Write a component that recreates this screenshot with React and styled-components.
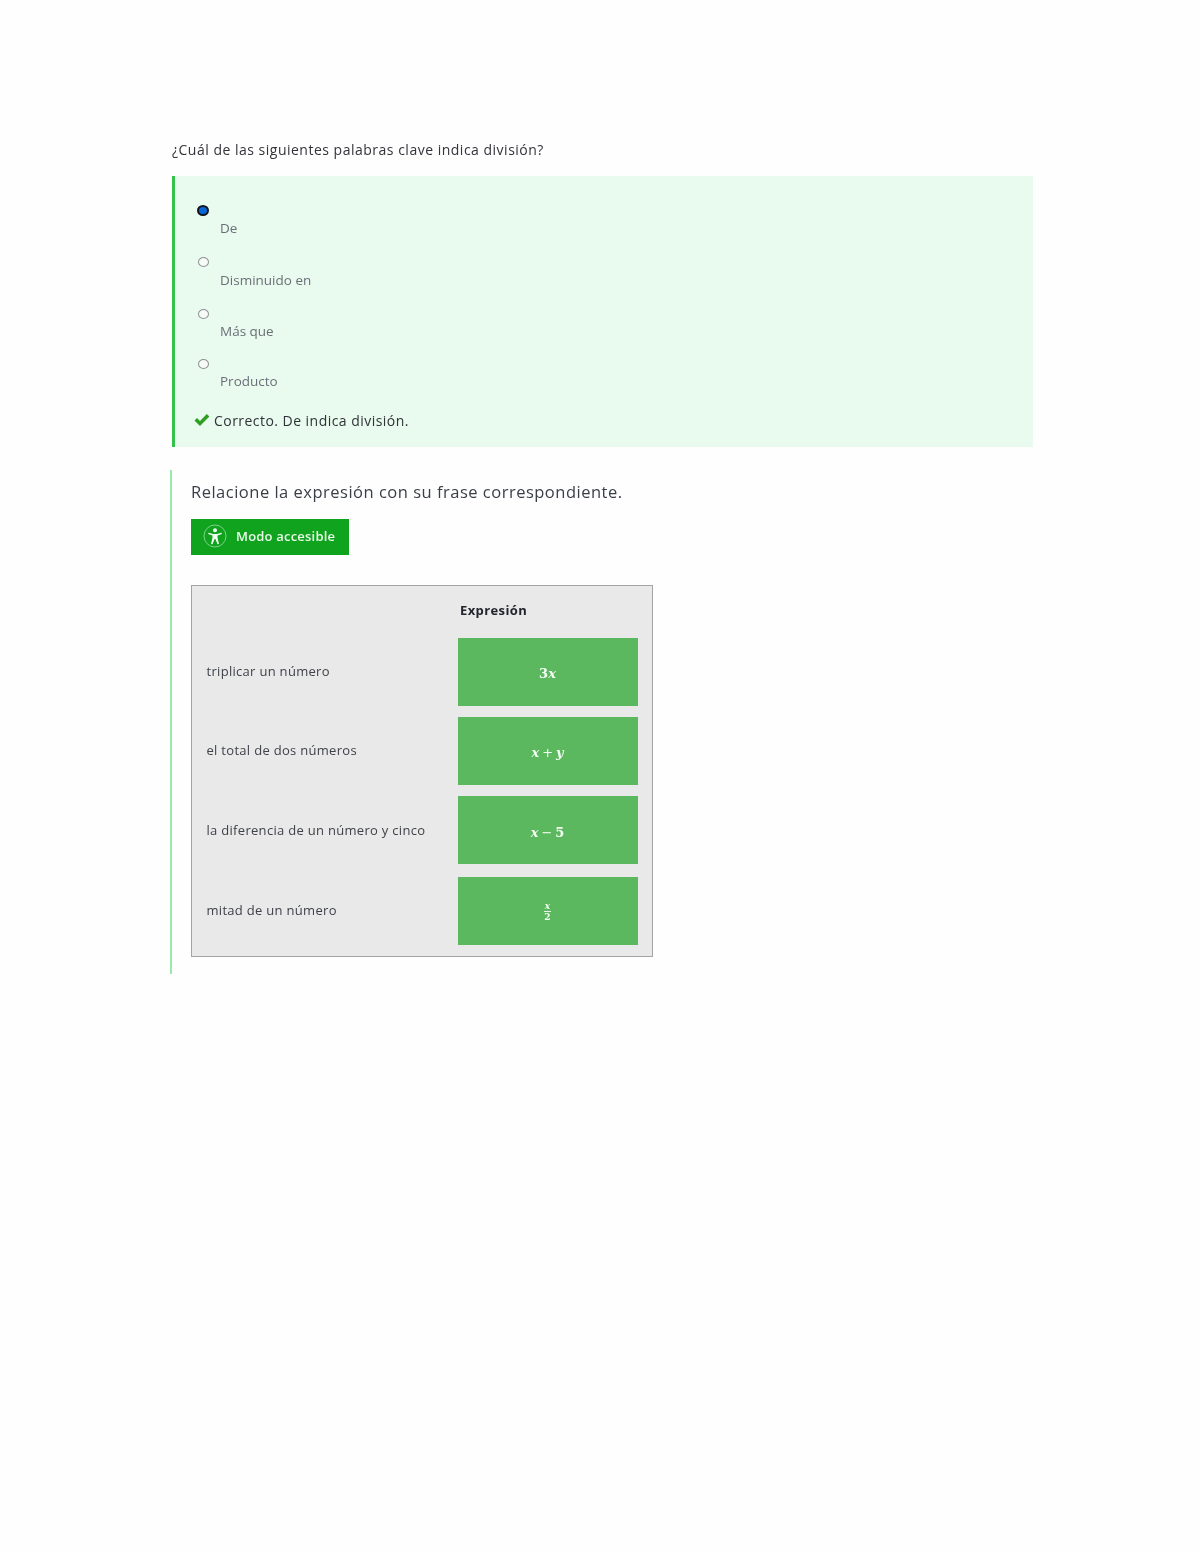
import React from "react";
import styled, { createGlobalStyle } from "styled-components";

const Global = createGlobalStyle`
  html, body { margin: 0; padding: 0; background: #fefefe; }
  body { font-family: "Open Sans", "Noto Sans", sans-serif; }
`;

const Page = styled.div`
  width: 1200px;
  height: 1553px;
  box-sizing: border-box;
  padding: 140px 0 0 169.5px;
  filter: blur(0.35px);
`;

const Question = styled.p`
  margin: 0 0 17px 2.5px;
  font-size: 14px;
  line-height: 19px;
  letter-spacing: 0.5px;
  color: #33333a;
`;

const AnswerPanel = styled.section`
  margin-left: 2.5px;
  width: 861px;
  height: 271px;
  box-sizing: border-box;
  padding: 29px 0 0 22px;
  background: #e9faee;
  border-left: 3px solid #35c24c;
`;

const Option = styled.div`
  height: ${(p) => p.$h}px;
  display: flex;
  flex-direction: column;
  align-items: flex-start;
`;

const Radio = styled.span`
  display: block;
  box-sizing: border-box;
  width: ${(p) => (p.$on ? 12 : 11)}px;
  height: ${(p) => (p.$on ? 11 : 10)}px;
  margin-left: ${(p) => (p.$on ? 0 : 0.5)}px;
  border-radius: 50%;
  background: ${(p) => (p.$on ? "#0a66d8" : "#f6fbf8")};
  border: ${(p) => (p.$on ? "2.5px solid #10141c" : "1.5px solid #8f9192")};
`;

const OptionLabel = styled.span`
  margin: ${(p) => p.$top}px 0 0 23px;
  font-size: 13.5px;
  line-height: 18px;
  color: #6b6f78;
`;

const Feedback = styled.div`
  display: flex;
  align-items: center;
  gap: 4px;
  margin-top: 2px;
  margin-left: -3px;
  font-size: 14px;
  line-height: 19px;
  letter-spacing: 0.46px;
  color: #2f3338;
`;

const Matching = styled.section`
  margin-top: 23px;
  height: 504px;
  box-sizing: border-box;
  padding: 11px 0 0 19.5px;
  border-left: 2px solid #9be8ab;
`;

const Prompt = styled.h2`
  margin: 0 0 16px;
  font-size: 16.5px;
  line-height: 22px;
  font-weight: 400;
  letter-spacing: 0.5px;
  color: #3a3f47;
`;

const AccessButton = styled.button`
  display: flex;
  align-items: center;
  gap: 9px;
  width: 158px;
  height: 36px;
  box-sizing: border-box;
  padding: 0 0 2px 12px;
  border: 0;
  background: #10a41e;
  color: #eafbe9;
  font-family: inherit;
  font-size: 13px;
  font-weight: 600;
  letter-spacing: 0.2px;
`;

const Board = styled.div`
  margin-top: 30px;
  width: 462px;
  height: 372px;
  box-sizing: border-box;
  padding: 14px 14px 0 14.5px;
  background: #e9e9e9;
  border: 1px solid #a3a3a3;
`;

const HeaderRow = styled.div`
  display: grid;
  grid-template-columns: 251px 180px;
  height: 38px;
`;

const ColumnTitle = styled.span`
  grid-column: 2;
  padding-left: 2.5px;
  font-size: 13px;
  line-height: 20px;
  font-weight: 700;
  letter-spacing: 0.4px;
  color: #22252e;
`;

const Row = styled.div`
  display: grid;
  grid-template-columns: 251px 180px;
  align-items: center;
  height: 68px;
  margin-bottom: ${(p) => p.$gap}px;
`;

const Phrase = styled.span`
  padding-bottom: ${(p) => p.$lift}px;
  font-size: 13px;
  letter-spacing: 0.3px;
  color: #3f4249;
  white-space: nowrap;
`;

const Tile = styled.div`
  height: 68px;
  box-sizing: border-box;
  padding-top: ${(p) => p.$drop}px;
  display: flex;
  align-items: center;
  justify-content: center;
  background: #5cb85f;
  color: #f4fff4;
  font-family: "DejaVu Serif", "Liberation Serif", serif;
  font-size: 13px;
  font-weight: 700;
`;

const Var = styled.i`
  font-style: italic;
`;

const Op = styled.span`
  margin: 0 3px;
  font-weight: 400;
`;

const Frac = styled.span`
  display: inline-flex;
  flex-direction: column;
  align-items: center;
  font-size: 9px;
  line-height: 8px;
`;

const FracTop = styled.span`
  padding: 0 1px 1px;
  border-bottom: 1px solid #e6f7e6;
`;

const FracBottom = styled.span`
  padding-top: 1px;
`;

const AccessIcon = () => (
  <svg width="24" height="24" viewBox="0 0 24 24" fill="none">
    <circle cx="12" cy="12" r="11" stroke="#7fd088" strokeWidth="1" />
    <circle cx="12" cy="6.2" r="2" fill="#f2fff2" />
    <path
      d="M5.5 8.8 L10 10 L14 10 L18.5 8.8 L18.8 10 L14.5 11.6 L14.6 14 L16 20 L14.5 20.2 L12.4 15 L11.6 15 L9.5 20.2 L8 20 L9.4 14 L9.5 11.6 L5.2 10 Z"
      fill="#f2fff2"
    />
  </svg>
);

const CheckIcon = () => (
  <svg width="16" height="14" viewBox="0 0 16 14">
    <path d="M0.5 6.5 L3 4 L6 7 L12.8 0 L15.4 2.5 L6 12 Z" fill="#2f9e22" />
  </svg>
);

const options = [
  { label: "De", h: 52, top: 3, on: true },
  { label: "Disminuido en", h: 52, top: 4 },
  { label: "Más que", h: 50, top: 3 },
  { label: "Producto", h: 50, top: 3 },
];

const rows = [
  { phrase: "triplicar un número", gap: 11, lift: 2, drop: 3, math: <><span>3</span><Var>x</Var></> },
  { phrase: "el total de dos números", gap: 11, lift: 2, drop: 3, math: <><Var>x</Var><Op>+</Op><Var>y</Var></> },
  { phrase: "la diferencia de un número y cinco", gap: 13, lift: 0, drop: 4, math: <><Var>x</Var><Op>−</Op><span>5</span></> },
  { phrase: "mitad de un número", gap: 0, lift: 2, drop: 0, math: <Frac><FracTop><Var>x</Var></FracTop><FracBottom>2</FracBottom></Frac> },
];

export default function App() {
  return (
    <Page>
      <Global />
      <Question>¿Cuál de las siguientes palabras clave indica división?</Question>
      <AnswerPanel>
        {options.map((o) => (
          <Option key={o.label} $h={o.h}>
            <Radio $on={o.on} />
            <OptionLabel $top={o.top}>{o.label}</OptionLabel>
          </Option>
        ))}
        <Feedback>
          <CheckIcon />
          <span>Correcto. De indica división.</span>
        </Feedback>
      </AnswerPanel>
      <Matching>
        <Prompt>Relacione la expresión con su frase correspondiente.</Prompt>
        <AccessButton>
          <AccessIcon />
          Modo accesible
        </AccessButton>
        <Board>
          <HeaderRow>
            <ColumnTitle>Expresión</ColumnTitle>
          </HeaderRow>
          {rows.map((r) => (
            <Row key={r.phrase} $gap={r.gap}>
              <Phrase $lift={r.lift}>{r.phrase}</Phrase>
              <Tile $drop={r.drop}>{r.math}</Tile>
            </Row>
          ))}
        </Board>
      </Matching>
    </Page>
  );
}
